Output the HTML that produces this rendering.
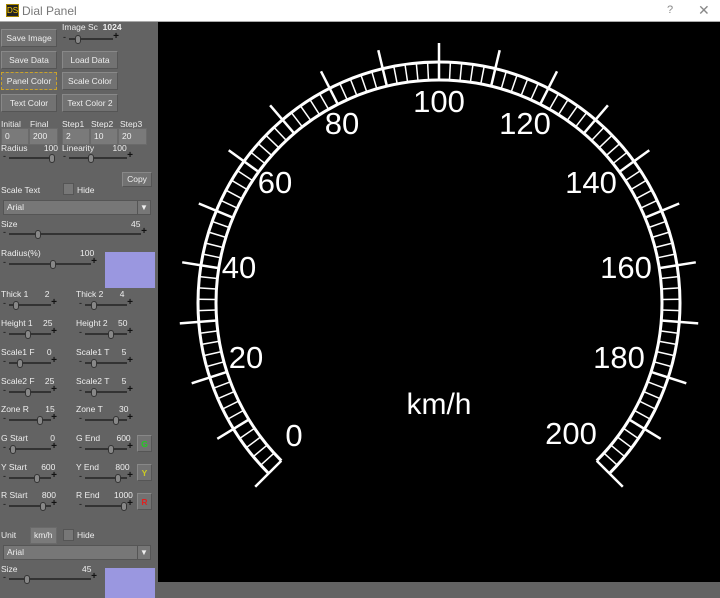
<!DOCTYPE html>
<html><head><style>
*{margin:0;padding:0;box-sizing:border-box}
body{width:720px;height:598px;overflow:hidden;background:#636363;font-family:"Liberation Sans",sans-serif;position:relative}
#title{position:absolute;left:0;top:0;width:720px;height:22px;background:#fff;border-bottom:1px solid #aaa}
#title .t{position:absolute;left:22px;top:4px;font-size:12px;color:#777}
#title .ic{position:absolute;left:6px;top:4px;width:13px;height:13px;background:#222;border:1px solid #a80;color:#fc0;font-size:8px;line-height:11px;text-align:center}
#dial{position:absolute;left:158px;top:22px;width:562px;height:560px;background:#000}
.p{position:absolute;font-size:8.5px;color:#eee;white-space:nowrap}
.b{position:absolute;background:#727272;border:1px solid #555;border-top-color:#888;border-left-color:#888;color:#eee;font-size:8.5px;text-align:center;line-height:16px;height:18px}
.in{position:absolute;background:#7a7a7a;border:1px solid #6a6a6a;height:17px;color:#eee;font-size:8.5px;line-height:15px;padding-left:3px}
.sl{position:absolute;height:8px}
.sl i{position:absolute;top:3px;height:2px;background:#333;left:6px;right:6px}
.sl b{position:absolute;top:0;width:6px;height:9px;border:1px solid #333;background:#888;border-radius:3px}
.sl .m{position:absolute;left:0;top:-3px;font-size:9px;color:#111;font-style:normal}
.sl .pl{position:absolute;right:0;top:-4px;font-size:10px;color:#111;font-weight:bold}
.cb{position:absolute;width:11px;height:12px;border:1px solid #555;background:#777}
.combo{position:absolute;background:#777;border:1px solid #555;height:15px;font-size:8.5px;color:#eee;line-height:13px;padding-left:3px}
.combo s{position:absolute;right:-14px;top:-1px;width:14px;height:15px;background:#777;border:1px solid #555;text-decoration:none;font-size:8px;text-align:center}
.col{position:absolute;background:#9a97e0}
</style></head><body>
<div id="title"><div class="ic">DS</div><div class="t">Dial Panel</div>
<div style="position:absolute;left:667px;top:4px;font-size:11px;color:#888">?</div>
<div style="position:absolute;left:698px;top:2px;font-size:14px;color:#888">✕</div></div>

<div class="b" style="left:1px;top:29px;width:56px">Save Image</div>
<div class="p" style="left:62px;top:22px">Image Sc &nbsp;<b>1024</b></div>
<div class="sl" style="left:63px;top:35px;width:56px"><span class="m">-</span><i></i><b style="left:12px"></b><span class="pl">+</span></div>
<div class="b" style="left:1px;top:51px;width:56px">Save Data</div>
<div class="b" style="left:62px;top:51px;width:56px">Load Data</div>
<div class="b" style="left:1px;top:72px;width:56px;border:1px dashed #c9a22a">Panel Color</div>
<div class="b" style="left:62px;top:72px;width:56px">Scale Color</div>
<div class="b" style="left:1px;top:94px;width:56px">Text Color</div>
<div class="b" style="left:62px;top:94px;width:56px">Text Color 2</div>
<div class="p" style="left:1px;top:119px">Initial</div><div class="p" style="left:30px;top:119px">Final</div>
<div class="p" style="left:62px;top:119px">Step1</div><div class="p" style="left:91px;top:119px">Step2</div><div class="p" style="left:120px;top:119px">Step3</div>
<div class="in" style="left:1px;top:128px;width:28px">0</div><div class="in" style="left:29px;top:128px;width:29px">200</div>
<div class="in" style="left:62px;top:128px;width:28px">2</div><div class="in" style="left:90px;top:128px;width:28px">10</div><div class="in" style="left:118px;top:128px;width:29px">20</div>
<div class="p" style="left:1px;top:143px">Radius <span style="margin-left:14px">100</span></div>
<div class="p" style="left:62px;top:143px">Linearity <span style="margin-left:16px">100</span></div>
<div class="sl" style="left:3px;top:154px;width:55px"><span class="m">-</span><i></i><b style="left:46px"></b></div>
<div class="sl" style="left:63px;top:154px;width:70px"><span class="m">-</span><i></i><b style="left:25px"></b><span class="pl">+</span></div>
<div class="b" style="left:122px;top:172px;width:30px;height:15px;line-height:13px">Copy</div>
<div class="p" style="left:1px;top:185px">Scale Text</div>
<div class="cb" style="left:63px;top:183px"></div><div class="p" style="left:77px;top:185px">Hide</div>
<div class="combo" style="left:3px;top:200px;width:135px">Arial<s>▼</s></div>
<div class="p" style="left:1px;top:219px">Size</div><div class="p" style="left:131px;top:219px">45</div>
<div class="sl" style="left:3px;top:230px;width:144px"><span class="m">-</span><i></i><b style="left:32px"></b><span class="pl">+</span></div>
<div class="p" style="left:1px;top:248px">Radius(%)</div><div class="p" style="left:80px;top:248px">100</div>
<div class="sl" style="left:3px;top:260px;width:94px"><span class="m">-</span><i></i><b style="left:47px"></b><span class="pl">+</span></div>
<div class="col" style="left:105px;top:252px;width:50px;height:36px"></div>

<div class="p" style="left:1px;top:289px">Thick 1 <span style="margin-left:14px">2</span></div>
<div class="p" style="left:76px;top:289px">Thick 2 <span style="margin-left:14px">4</span></div>
<div class="sl" style="left:3px;top:301px;width:54px"><span class="m">-</span><i></i><b style="left:10px"></b><span class="pl">+</span></div>
<div class="sl" style="left:79px;top:301px;width:54px"><span class="m">-</span><i></i><b style="left:12px"></b><span class="pl">+</span></div>
<div class="p" style="left:1px;top:318px">Height 1 <span style="margin-left:8px">25</span></div>
<div class="p" style="left:76px;top:318px">Height 2 <span style="margin-left:8px">50</span></div>
<div class="sl" style="left:3px;top:330px;width:54px"><span class="m">-</span><i></i><b style="left:22px"></b><span class="pl">+</span></div>
<div class="sl" style="left:79px;top:330px;width:54px"><span class="m">-</span><i></i><b style="left:29px"></b><span class="pl">+</span></div>
<div class="p" style="left:1px;top:347px">Scale1 F <span style="margin-left:10px">0</span></div>
<div class="p" style="left:76px;top:347px">Scale1 T <span style="margin-left:10px">5</span></div>
<div class="sl" style="left:3px;top:359px;width:54px"><span class="m">-</span><i></i><b style="left:14px"></b><span class="pl">+</span></div>
<div class="sl" style="left:79px;top:359px;width:54px"><span class="m">-</span><i></i><b style="left:12px"></b><span class="pl">+</span></div>
<div class="p" style="left:1px;top:376px">Scale2 F <span style="margin-left:8px">25</span></div>
<div class="p" style="left:76px;top:376px">Scale2 T <span style="margin-left:10px">5</span></div>
<div class="sl" style="left:3px;top:388px;width:54px"><span class="m">-</span><i></i><b style="left:22px"></b><span class="pl">+</span></div>
<div class="sl" style="left:79px;top:388px;width:54px"><span class="m">-</span><i></i><b style="left:12px"></b><span class="pl">+</span></div>
<div class="p" style="left:1px;top:404px">Zone R <span style="margin-left:14px">15</span></div>
<div class="p" style="left:76px;top:404px">Zone T <span style="margin-left:14px">30</span></div>
<div class="sl" style="left:3px;top:416px;width:54px"><span class="m">-</span><i></i><b style="left:34px"></b><span class="pl">+</span></div>
<div class="sl" style="left:79px;top:416px;width:54px"><span class="m">-</span><i></i><b style="left:34px"></b><span class="pl">+</span></div>
<div class="p" style="left:1px;top:433px">G Start <span style="margin-left:20px">0</span></div>
<div class="p" style="left:76px;top:433px">G End <span style="margin-left:14px">600</span></div>
<div class="sl" style="left:3px;top:445px;width:54px"><span class="m">-</span><i></i><b style="left:7px"></b><span class="pl">+</span></div>
<div class="sl" style="left:79px;top:445px;width:54px"><span class="m">-</span><i></i><b style="left:29px"></b><span class="pl">+</span></div>
<div class="b" style="left:137px;top:435px;width:15px;height:17px;color:#2c2;font-weight:bold">G</div>
<div class="p" style="left:1px;top:462px">Y Start <span style="margin-left:12px">600</span></div>
<div class="p" style="left:76px;top:462px">Y End <span style="margin-left:14px">800</span></div>
<div class="sl" style="left:3px;top:474px;width:54px"><span class="m">-</span><i></i><b style="left:31px"></b><span class="pl">+</span></div>
<div class="sl" style="left:79px;top:474px;width:54px"><span class="m">-</span><i></i><b style="left:36px"></b><span class="pl">+</span></div>
<div class="b" style="left:137px;top:464px;width:15px;height:17px;color:#cc2;font-weight:bold">Y</div>
<div class="p" style="left:1px;top:490px">R Start <span style="margin-left:12px">800</span></div>
<div class="p" style="left:76px;top:490px">R End <span style="margin-left:12px">1000</span></div>
<div class="sl" style="left:3px;top:502px;width:54px"><span class="m">-</span><i></i><b style="left:37px"></b><span class="pl">+</span></div>
<div class="sl" style="left:79px;top:502px;width:54px"><span class="m">-</span><i></i><b style="left:42px"></b><span class="pl">+</span></div>
<div class="b" style="left:137px;top:493px;width:15px;height:17px;color:#d22;font-weight:bold">R</div>
<div class="p" style="left:1px;top:530px">Unit</div>
<div class="in" style="left:30px;top:527px;width:27px">km/h</div>
<div class="cb" style="left:63px;top:529px"></div><div class="p" style="left:77px;top:530px">Hide</div>
<div class="combo" style="left:3px;top:545px;width:135px">Arial<s>▼</s></div>
<div class="p" style="left:1px;top:564px">Size</div><div class="p" style="left:82px;top:564px">45</div>
<div class="sl" style="left:3px;top:575px;width:94px"><span class="m">-</span><i></i><b style="left:21px"></b><span class="pl">+</span></div>
<div class="col" style="left:105px;top:568px;width:50px;height:30px"></div>

<div id="dial"><svg width="562" height="560" id="sv" font-family="Liberation Sans, sans-serif">
<g id="g" stroke="#fff" fill="none"></g>
<g fill="#fff" font-size="31" text-anchor="middle">
<text x="136" y="424">0</text>
<text x="88" y="346">20</text>
<text x="81" y="256">40</text>
<text x="117" y="171">60</text>
<text x="184" y="112">80</text>
<text x="281" y="90">100</text>
<text x="367" y="112">120</text>
<text x="433" y="171">140</text>
<text x="468" y="256">160</text>
<text x="461" y="346">180</text>
<text x="413" y="422">200</text>
<text x="281" y="392" font-size="30">km/h</text>
</g></svg></div>
<script>
var g=document.getElementById('g'),cx=281,cy=281,h='';
function pt(a,r){var t=a*Math.PI/180;return [cx+r*Math.cos(t),cy-r*Math.sin(t)];}
function ln(a,r1,r2,w){var p=pt(a,r1),q=pt(a,r2);h+='<line x1="'+p[0].toFixed(1)+'" y1="'+p[1].toFixed(1)+'" x2="'+q[0].toFixed(1)+'" y2="'+q[1].toFixed(1)+'" stroke-width="'+w+'"/>';}
function arc(r){var p=pt(225,r),q=pt(-45,r);h+='<path d="M'+p[0]+' '+p[1]+' A'+r+' '+r+' 0 1 1 '+q[0]+' '+q[1]+'" stroke-width="3"/>';}
arc(223);arc(241);
for(var v=0;v<=200;v+=2){var a=225-v*1.35;if(v%10==0)ln(a,223,260,2.5);else ln(a,223,241,1.5);}
g.innerHTML=h;
</script>
</body></html>
